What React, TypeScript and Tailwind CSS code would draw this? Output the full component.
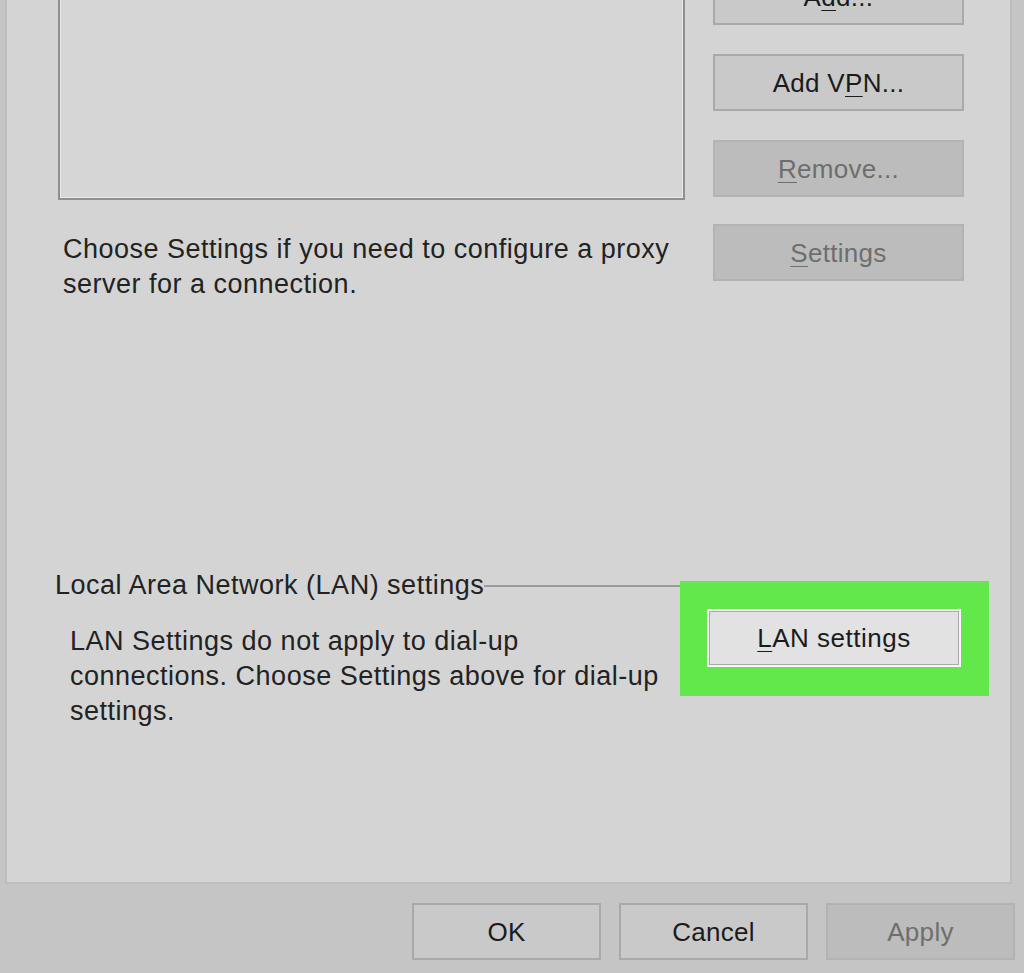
import React from 'react';

const font = { fontFamily: '"Liberation Sans", Arial, sans-serif' };

type BtnProps = {
  label: React.ReactNode;
  disabled?: boolean;
  className?: string;
};

const Key = ({ children }: { children: React.ReactNode }) => <span className="underline underline-offset-[4px] decoration-1">{children}</span>;

const DlgButton: React.FC<BtnProps> = ({ label, disabled, className = '' }) => (
  <button
    className={`h-[57px] flex items-center justify-center text-[26px] leading-none tracking-[0.3px] border-[2px] ${
      disabled ? 'bg-[#bcbcbc] border-[#b3b3b3] text-[#6e6e6e]' : 'bg-[#c9c9c9] border-[#a9a9a9] text-[#1b1b1b]'
    } ${className}`}
  >
    {label}
  </button>
);

const App: React.FC = () => {
  return (
    <div className="w-[1024px] h-[973px] bg-[#c5c5c5] overflow-hidden flex flex-col" style={font}>
      {/* Tab page */}
      <div className="ml-[5px] w-[1007px] h-[884px] shrink-0 bg-[#d4d4d4] border-l-[2px] border-r-[2px] border-b-[2px] border-[#bdbdbd] overflow-hidden">
        <div className="pl-[51px] text-[#222222]">
          {/* connections list + buttons */}
          <div className="flex gap-[28px] -mt-[40px]">
            <div className="w-[627px] h-[240px] border-[2px] border-[#8f8f8f] shadow-[inset_0_0_0_1px_#e8e8e8] bg-[#d6d6d6]" />
            <div className="flex flex-col gap-[29px] pt-[8px]">
              <DlgButton className="w-[251px]" label={<span>A<Key>d</Key>d...</span>} />
              <DlgButton className="w-[251px]" label={<span>Add V<Key>P</Key>N...</span>} />
              <DlgButton className="w-[251px]" disabled label={<span><Key>R</Key>emove...</span>} />
            </div>
          </div>

          {/* proxy settings */}
          <div className="flex gap-[28px] mt-[24px]">
            <p className="w-[627px] pl-[5px] pt-[8px] text-[27px] leading-[35px] tracking-[0.5px] whitespace-nowrap">
              Choose Settings if you need to configure a proxy
              <br />
              server for a connection.
            </p>
            <DlgButton className="w-[251px]" disabled label={<span><Key>S</Key>ettings</span>} />
          </div>

          {/* LAN group */}
          <div className="flex mt-[266px]">
            <div className="w-[625px] -ml-[3px]">
              <div className="flex items-center h-[35px]">
                <span className="text-[27px] tracking-[0.5px] whitespace-nowrap">Local Area Network (LAN) settings</span>
                <div className="flex-1 h-[2px] bg-[#9a9a9a]" />
              </div>
              <p className="mt-[21px] pl-[15px] text-[27px] leading-[35px] tracking-[0.5px] whitespace-nowrap">
                LAN Settings do not apply to dial-up
                <br />
                connections. Choose Settings above for dial-up
                <br />
                settings.
              </p>
            </div>
            <div className="mt-[13px] w-[309px] h-[115px] bg-[#62e84b] pl-[27px] pt-[28px]">
              <button className="w-[254px] h-[58px] flex items-center justify-center bg-[#e2e2e2] border-[2px] border-[#f6f6f6] shadow-[inset_0_0_0_1px_#a9a9a9] text-[26px] leading-none tracking-[0.5px] text-[#1b1b1b]">
                <span><Key>L</Key>AN settings</span>
              </button>
            </div>
          </div>
        </div>
      </div>

      {/* dialog buttons */}
      <div className="flex justify-end gap-[18px] pr-[9px] pt-[19px]">
        <DlgButton className="w-[189px]" label="OK" />
        <DlgButton className="w-[189px]" label="Cancel" />
        <DlgButton className="w-[189px]" disabled label="Apply" />
      </div>
    </div>
  );
};

export default App;
